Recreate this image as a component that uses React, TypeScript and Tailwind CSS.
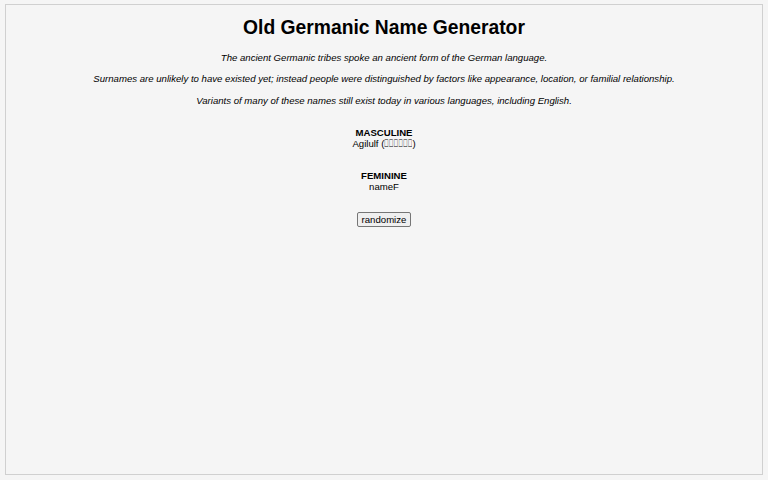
export default function App() {
  return (
    <div className="h-[480px] w-[768px] bg-[#f5f5f5] p-[4px_5px_5px_5px] font-['Liberation_Sans',Arial,sans-serif] text-black">
      <div className="flex h-full flex-col items-center border border-[#d0d0d0] pt-[11px] text-center">
        <h1 className="text-[19.3px] font-bold leading-[24px]">Old Germanic Name Generator</h1>
        <div className="mt-[11.5px] flex flex-col gap-[10.5px] text-[9.6px] italic leading-[11px]">
          <p>The ancient Germanic tribes spoke an ancient form of the German language.</p>
          <p>Surnames are unlikely to have existed yet; instead people were distinguished by factors like appearance, location, or familial relationship.</p>
          <p>Variants of many of these names still exist today in various languages, including English.</p>
        </div>
        <div className="mt-[21px] text-[9.6px] leading-[11px]">
          <div className="font-bold">MASCULINE</div>
          <div className="whitespace-nowrap">
            Agilulf (
            {/* runic spelling, no local font has these glyphs */}
            <span className="inline-block w-[28px] overflow-hidden align-top">
              <span className="inline-block origin-left scale-x-[0.6] whitespace-nowrap text-[10.5px] font-bold">
                {"\uE000\uE000\uE000\uE000\uE000\uE000"}
              </span>
            </span>
            )
          </div>
        </div>
        <div className="mt-[21px] text-[9.6px] leading-[11px]">
          <div className="font-bold">FEMININE</div>
          <div>nameF</div>
        </div>
        <button
          type="button"
          className="mt-[20.5px] rounded-[2px] border border-[#767676] bg-[#efefef] px-[4px] py-[1px] text-[9.6px] leading-[11px]"
        >
          randomize
        </button>
      </div>
    </div>
  )
}
